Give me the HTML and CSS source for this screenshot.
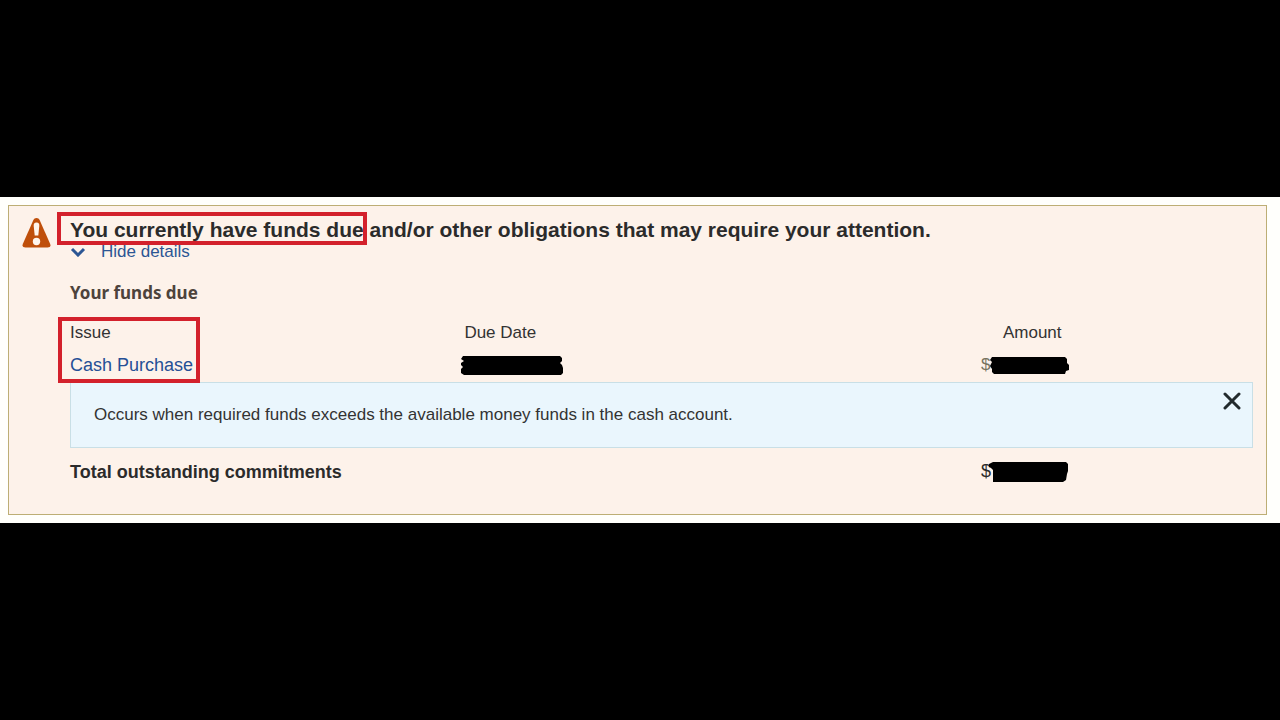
FILE: index.html
```html
<!DOCTYPE html>
<html lang="en">
<head>
  <meta charset="UTF-8">
  <meta name="viewport" content="width=device-width, initial-scale=1.0">
  <title>Funds due</title>
  <link rel="stylesheet" href="styles.css">
</head>
<body>
  <main class="sheet">
    <section class="alert">
      <svg class="alert-icon" viewBox="0 0 28 30" aria-hidden="true">
        <path d="M14 0C15.500 0 16.500 .8 17.200 2.200L27.500 25.500C28.600 28 27.600 29.500 25 29.500H3C.4 29.500-.6 28 .5 25.500L10.800 2.200C11.500 .8 12.500 0 14 0Z" fill="#bf4f0b"/>
        <path d="M14 4.500C16.300 4.500 17 6 16.800 8L15.800 17.500H12.200L11.200 8C11 6 11.700 4.500 14 4.500Z" fill="#fff5ec"/>
        <circle cx="14" cy="23.500" r="3.700" fill="#fff5ec"/>
      </svg>
      <div class="alert-body">
        <h1 class="title"><span class="marked">You currently have funds due</span> and/or other obligations that may require your attention.</h1>
        <button class="toggle" type="button">
          <svg class="chevron" viewBox="0 0 16 10" aria-hidden="true"><path d="M2 2L8 8L14 2"/></svg>
          Hide details
        </button>
        <h2 class="subtitle">Your funds due</h2>
        <table class="funds">
          <colgroup>
            <col class="col-issue">
            <col>
            <col class="col-amount">
          </colgroup>
          <thead>
            <tr>
              <th class="issue">Issue<span class="mark-box"></span></th>
              <th class="date">Due Date</th>
              <th class="amount">Amount</th>
            </tr>
          </thead>
          <tbody>
            <tr class="item">
              <td><a href="#">Cash Purchase</a></td>
              <td>
                <svg class="redact redact-date" viewBox="0 0 104 20" aria-hidden="true"><path d="M3 1H100L102 3V6L100 8L102 10L103 13V18L101 20H4L1 18V14L3 12L1 10V8L4 6L1 4Z"/></svg>
              </td>
              <td class="value">$<svg class="redact" viewBox="0 0 80 20" aria-hidden="true"><path d="M2 1H75L77 3V7L79 9V14L76 15L75 18H4L2 16V13L0 10L2 6L0 4Z"/></svg></td>
            </tr>
            <tr>
              <td colspan="3">
                <div class="note">
                  <p>Occurs when required funds exceeds the available money funds in the cash account.</p>
                  <button class="close" type="button" aria-label="Close">
                    <svg viewBox="0 0 18 18" aria-hidden="true"><path d="M2 2L16 16M16 2L2 16"/></svg>
                  </button>
                </div>
              </td>
            </tr>
          </tbody>
          <tfoot>
            <tr class="total">
              <th colspan="2">Total outstanding commitments</th>
              <td class="value">$<svg class="redact" viewBox="0 0 80 20" aria-hidden="true"><path d="M2 0H75L77 2V9L76 12L75 18L72 20H2V8L0 6L-2 5L-2 2Z"/></svg></td>
            </tr>
          </tfoot>
        </table>
      </div>
    </section>
  </main>
</body>
</html>
```
FILE: styles.css
```css
body {
  margin: 0;
  min-height: 100vh;
  display: flex;
  flex-direction: column;
  justify-content: center;
  background-color: #000;
  color: #333;
  font-family: "Liberation Sans", Arial, sans-serif;
  font-size: 17px;
  line-height: 20px;
}

.sheet {
  padding: 8px 13px 8px 8px;
  background-color: #fffffc;
}

.alert {
  display: flex;
  gap: 19px;
  padding: 12px 13px 20px;
  border: 1px solid #bdae75;
  background-color: #fdf2ea;
}

.alert-icon {
  flex: none;
  width: 29px;
  height: 30px;
}

.alert-body {
  flex: 1;
}

.title {
  margin: 0;
  color: #2b2b2b;
  font-size: 21px;
  line-height: 24px;
}

.marked {
  position: relative;
}

.marked::after {
  content: "";
  position: absolute;
  inset: -6px -3px -4px -13px;
  border: 4px solid #d3212c;
}

.toggle {
  display: flex;
  align-items: center;
  gap: 15px;
  padding: 0;
  border: none;
  background: none;
  color: #2c5694;
  font: inherit;
  cursor: pointer;
}

.chevron {
  width: 16px;
  height: 10px;
  fill: none;
  stroke: #2c5694;
  stroke-width: 3;
}

.subtitle {
  margin: 20px 0 19px;
  color: #4d433c;
  font-family: "Noto Sans", sans-serif;
  font-size: 17px;
  line-height: 22px;
}

.funds {
  width: 100%;
  border-collapse: collapse;
  table-layout: fixed;
}

.col-issue {
  width: 33%;
}

.col-amount {
  width: 23%;
}

.funds th,
.funds td {
  padding: 0;
  text-align: left;
}

.funds thead th {
  font-weight: normal;
}

.funds .issue {
  position: relative;
}

.funds .date {
  padding-left: 4px;
}

.funds .amount {
  padding-left: 22px;
}

.mark-box {
  position: absolute;
  top: -6px;
  left: -12px;
  width: 134px;
  height: 58px;
  border: 4px solid #d3212c;
}

.funds .item td {
  padding: 12px 0 6px;
}

.item a {
  color: #254f96;
  font-size: 18px;
  text-decoration: none;
}

.redact {
  display: inline-block;
  width: 80px;
  height: 20px;
  vertical-align: middle;
  overflow: visible;
}

.redact-date {
  display: block;
  width: 104px;
}

.item .value {
  color: #77735f;
}

.note {
  display: flex;
  justify-content: space-between;
  align-items: flex-start;
  padding: 9px 11px 9px 23px;
  border: 1px solid #c9dfe6;
  background-color: #eaf6fd;
}

.note p {
  margin: 13px 0;
}

.close {
  display: flex;
  padding: 0;
  border: none;
  background: none;
  cursor: pointer;
}

.close svg {
  width: 18px;
  height: 18px;
  fill: none;
  stroke: #222a2d;
  stroke-width: 3;
  stroke-linecap: round;
}

.funds .total th,
.funds .total td {
  padding: 13px 0 12px;
  color: #2b2b2b;
  font-size: 18px;
}
```
